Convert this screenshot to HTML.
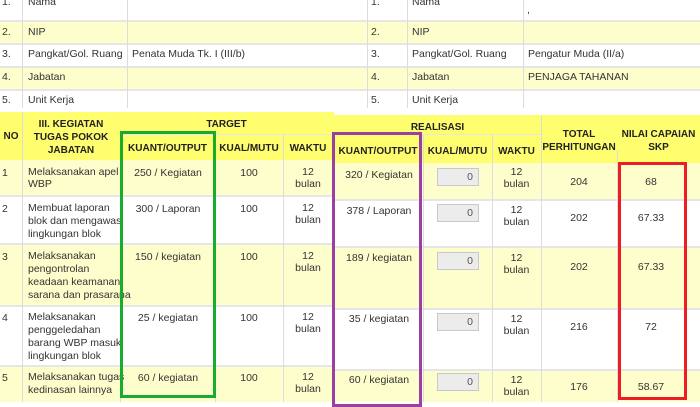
<!DOCTYPE html>
<html><head><meta charset="utf-8"><style>
*{margin:0;padding:0;box-sizing:border-box}
body{width:700px;height:402px;overflow:hidden;background:#fff;font-family:"Liberation Sans",Arial,sans-serif;font-size:10.5px;color:#333;position:relative}
div{position:absolute}
.y{background:#fefdcc}
.h{background:#fffe6e}
.vl{width:1px;background:#dcdcdc}
.hl{height:2px;background:#e6e6e6}
.t{white-space:nowrap;line-height:14px}
.b{font-weight:bold;font-size:10px;color:#222;text-align:center;line-height:13px;white-space:nowrap}
.c{text-align:center}
.inp{width:42px;height:18px;background:#ececec;border:1px solid #c8c8c8;text-align:right;padding-right:5px;line-height:16px;color:#555}
</style></head><body>
<div class="y" style="left:0;top:21px;width:700px;height:22px"></div>
<div class="y" style="left:0;top:67px;width:700px;height:22px"></div>
<div class="hl" style="left:0;top:20px;width:700px"></div>
<div class="hl" style="left:0;top:43px;width:700px"></div>
<div class="hl" style="left:0;top:66px;width:700px"></div>
<div class="hl" style="left:0;top:89px;width:700px"></div>
<div class="vl" style="left:22px;top:0;height:108px"></div>
<div class="vl" style="left:127px;top:0;height:108px"></div>
<div class="vl" style="left:367px;top:0;height:108px"></div>
<div class="vl" style="left:407px;top:0;height:108px"></div>
<div class="vl" style="left:523px;top:0;height:108px"></div>
<div class="t" style="left:2px;top:-5px">1.</div><div class="t" style="left:28px;top:-5px">Nama</div>
<div class="t" style="left:2px;top:25px">2.</div><div class="t" style="left:28px;top:25px">NIP</div>
<div class="t" style="left:2px;top:47px">3.</div><div class="t" style="left:28px;top:47px">Pangkat/Gol. Ruang</div><div class="t" style="left:132px;top:47px">Penata Muda Tk. I (III/b)</div>
<div class="t" style="left:2px;top:70px">4.</div><div class="t" style="left:28px;top:70px">Jabatan</div>
<div class="t" style="left:2px;top:93px">5.</div><div class="t" style="left:28px;top:93px">Unit Kerja</div>
<div class="t" style="left:371px;top:-5px">1.</div><div class="t" style="left:412px;top:-5px">Nama</div><div class="t" style="left:527px;top:3px">,</div>
<div class="t" style="left:371px;top:25px">2.</div><div class="t" style="left:412px;top:25px">NIP</div>
<div class="t" style="left:371px;top:47px">3.</div><div class="t" style="left:412px;top:47px">Pangkat/Gol. Ruang</div><div class="t" style="left:528px;top:47px">Pengatur Muda (II/a)</div>
<div class="t" style="left:371px;top:70px">4.</div><div class="t" style="left:412px;top:70px">Jabatan</div><div class="t" style="left:528px;top:70px">PENJAGA TAHANAN</div>
<div class="t" style="left:371px;top:93px">5.</div><div class="t" style="left:412px;top:93px">Unit Kerja</div>

<div class="h" style="left:0;top:112px;width:334px;height:48px"></div>
<div class="h" style="left:334px;top:115px;width:366px;height:48px"></div>
<div class="h" style="left:541px;top:115px;width:159px;height:50px"></div>
<div class="vl" style="left:22px;top:112px;height:290px"></div>
<div class="vl" style="left:120px;top:132px;height:270px"></div>
<div class="vl" style="left:283px;top:135px;height:267px"></div>
<div class="vl" style="left:423px;top:135px;height:267px"></div>
<div class="vl" style="left:492px;top:135px;height:267px"></div>
<div class="vl" style="left:541px;top:115px;height:287px"></div>
<div class="vl" style="left:617px;top:150px;height:252px"></div>
<div class="hl" style="left:120px;top:134px;width:213px;height:1px"></div>
<div class="hl" style="left:334px;top:134px;width:207px;height:1px"></div>

<div class="b" style="left:0;top:130px;width:22px">NO</div>
<div class="b" style="left:22px;top:118px;width:98px">III. KEGIATAN<br>TUGAS POKOK<br>JABATAN</div>
<div class="b" style="left:120px;top:118px;width:213px">TARGET</div>
<div class="b" style="left:120px;top:142px;width:95px">KUANT/OUTPUT</div>
<div class="b" style="left:215px;top:142px;width:68px">KUAL/MUTU</div>
<div class="b" style="left:283px;top:142px;width:50px">WAKTU</div>
<div class="b" style="left:334px;top:121px;width:207px">REALISASI</div>
<div class="b" style="left:334px;top:145px;width:88px">KUANT/OUTPUT</div>
<div class="b" style="left:423px;top:145px;width:69px">KUAL/MUTU</div>
<div class="b" style="left:492px;top:145px;width:49px">WAKTU</div>
<div class="b" style="left:541px;top:128px;width:76px">TOTAL<br>PERHITUNGAN</div>
<div class="b" style="left:617px;top:128px;width:83px">NILAI CAPAIAN<br>SKP</div>

<div class="y" style="left:0;top:160px;width:334px;height:35px"></div>
<div class="y" style="left:0;top:244px;width:334px;height:61px"></div>
<div class="y" style="left:0;top:366px;width:334px;height:36px"></div>
<div class="hl" style="left:0;top:195px;width:334px"></div>
<div class="hl" style="left:0;top:243px;width:334px"></div>
<div class="hl" style="left:0;top:305px;width:334px"></div>
<div class="hl" style="left:0;top:365px;width:334px"></div>
<div class="y" style="left:334px;top:163px;width:366px;height:36px"></div>
<div class="y" style="left:334px;top:247px;width:366px;height:61px"></div>
<div class="y" style="left:334px;top:370px;width:366px;height:32px"></div>
<div class="hl" style="left:334px;top:199px;width:366px"></div>
<div class="hl" style="left:334px;top:246px;width:366px"></div>
<div class="hl" style="left:334px;top:308px;width:366px"></div>
<div class="hl" style="left:334px;top:369px;width:366px"></div>
<div class="vl" style="left:22px;top:160px;height:242px"></div>
<div class="vl" style="left:120px;top:160px;height:242px"></div>
<div class="vl" style="left:215px;top:160px;height:242px"></div>
<div class="vl" style="left:283px;top:160px;height:242px"></div>
<div class="vl" style="left:423px;top:163px;height:239px"></div>
<div class="vl" style="left:492px;top:163px;height:239px"></div>
<div class="vl" style="left:541px;top:163px;height:239px"></div>
<div class="vl" style="left:617px;top:163px;height:239px"></div>

<div class="t" style="left:2px;top:166px">1</div><div class="t" style="left:28px;top:166px;line-height:12px">Melaksanakan apel<br>WBP</div>
<div class="t c" style="left:122px;top:166px;width:92px">250 / Kegiatan</div><div class="t c" style="left:215px;top:166px;width:68px">100</div><div class="t c" style="left:283px;top:166px;width:50px;line-height:12px">12<br>bulan</div>
<div class="t" style="left:2px;top:202px">2</div><div class="t" style="left:28px;top:202px;line-height:13px">Membuat laporan<br>blok dan mengawasi<br>lingkungan blok</div>
<div class="t c" style="left:122px;top:202px;width:92px">300 / Laporan</div><div class="t c" style="left:215px;top:202px;width:68px">100</div><div class="t c" style="left:283px;top:202px;width:50px;line-height:12px">12<br>bulan</div>
<div class="t" style="left:2px;top:250px">3</div><div class="t" style="left:28px;top:250px;line-height:13px">Melaksanakan<br>pengontrolan<br>keadaan keamanan<br>sarana dan prasarana</div>
<div class="t c" style="left:122px;top:250px;width:92px">150 / kegiatan</div><div class="t c" style="left:215px;top:250px;width:68px">100</div><div class="t c" style="left:283px;top:250px;width:50px;line-height:12px">12<br>bulan</div>
<div class="t" style="left:2px;top:311px">4</div><div class="t" style="left:28px;top:311px;line-height:13px">Melaksanakan<br>penggeledahan<br>barang WBP masuk<br>lingkungan blok</div>
<div class="t c" style="left:122px;top:311px;width:92px">25 / kegiatan</div><div class="t c" style="left:215px;top:311px;width:68px">100</div><div class="t c" style="left:283px;top:311px;width:50px;line-height:12px">12<br>bulan</div>
<div class="t" style="left:2px;top:371px">5</div><div class="t" style="left:28px;top:371px;line-height:13px">Melaksanakan tugas<br>kedinasan lainnya</div>
<div class="t c" style="left:122px;top:371px;width:92px">60 / kegiatan</div><div class="t c" style="left:215px;top:371px;width:68px">100</div><div class="t c" style="left:283px;top:371px;width:50px;line-height:12px">12<br>bulan</div>

<div class="t c" style="left:336px;top:168px;width:86px">320 / Kegiatan</div>
<div class="inp" style="left:437px;top:168px">0</div>
<div class="t c" style="left:492px;top:166px;width:49px;line-height:12px">12<br>bulan</div>
<div class="t c" style="left:541px;top:175px;width:76px">204</div><div class="t c" style="left:620px;top:175px;width:62px">68</div>

<div class="t c" style="left:336px;top:204px;width:86px">378 / Laporan</div>
<div class="inp" style="left:437px;top:204px">0</div>
<div class="t c" style="left:492px;top:204px;width:49px;line-height:12px">12<br>bulan</div>
<div class="t c" style="left:541px;top:211px;width:76px">202</div><div class="t c" style="left:620px;top:211px;width:62px">67.33</div>

<div class="t c" style="left:336px;top:251px;width:86px">189 / kegiatan</div>
<div class="inp" style="left:437px;top:252px">0</div>
<div class="t c" style="left:492px;top:252px;width:49px;line-height:12px">12<br>bulan</div>
<div class="t c" style="left:541px;top:260px;width:76px">202</div><div class="t c" style="left:620px;top:260px;width:62px">67.33</div>

<div class="t c" style="left:336px;top:312px;width:86px">35 / kegiatan</div>
<div class="inp" style="left:437px;top:313px">0</div>
<div class="t c" style="left:492px;top:313px;width:49px;line-height:12px">12<br>bulan</div>
<div class="t c" style="left:541px;top:320px;width:76px">216</div><div class="t c" style="left:620px;top:320px;width:62px">72</div>

<div class="t c" style="left:336px;top:373px;width:86px">60 / kegiatan</div>
<div class="inp" style="left:437px;top:373px">0</div>
<div class="t c" style="left:492px;top:374px;width:49px;line-height:12px">12<br>bulan</div>
<div class="t c" style="left:541px;top:380px;width:76px">176</div><div class="t c" style="left:620px;top:380px;width:62px">58.67</div>

<div style="left:120px;top:131px;width:96px;height:267px;border:3px solid #1aab2e"></div>
<div style="left:332px;top:132px;width:90px;height:275px;border:3px solid #9b3fa3"></div>
<div style="left:618px;top:162px;width:69px;height:238px;border:3px solid #ee1c24"></div>
</body></html>
